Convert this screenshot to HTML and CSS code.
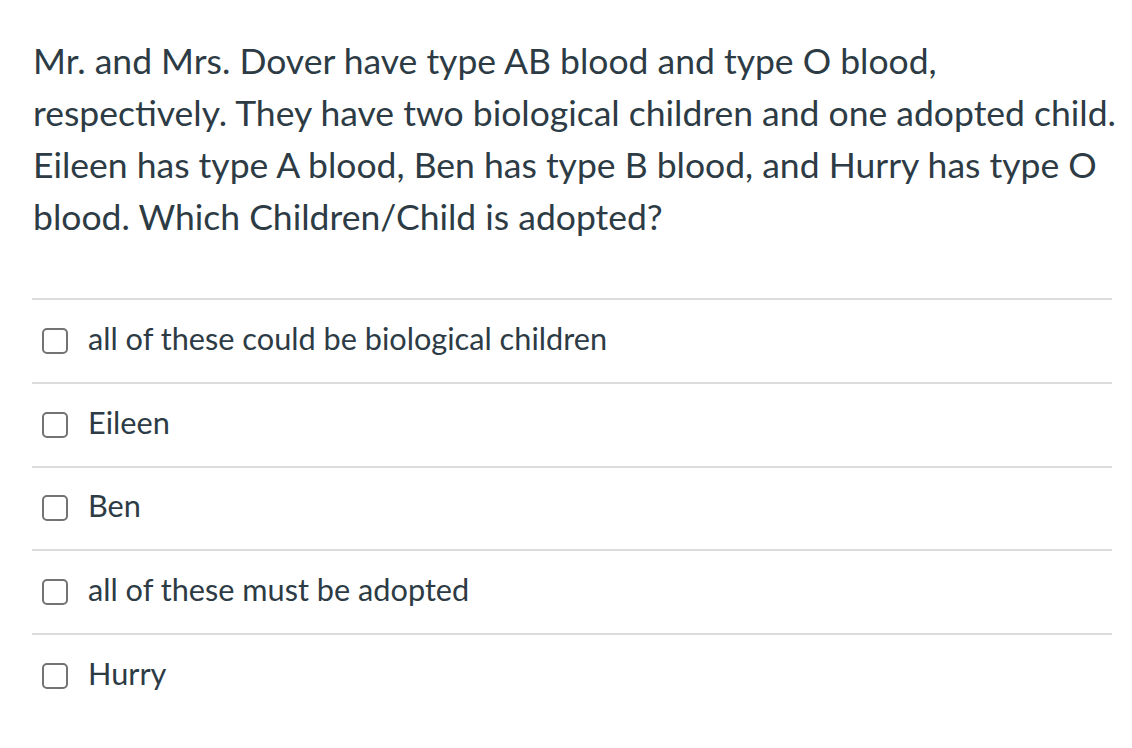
FILE: index.html
```html
<!DOCTYPE html>
<html>
<head>
<meta charset="utf-8">
<link rel="stylesheet" href="styles.css">
</head>
<body>
<div class="quiz">
  <p class="question">Mr. and Mrs. Dover have type AB blood and type O blood, respectively. They have two biological children and one adopted child. Eileen has type A blood, Ben has type B blood, and Hurry has type O blood. Which Children/Child is adopted?</p>
  <div class="answers">
    <label class="answer"><span class="box"></span><span class="text">all of these could be biological children</span></label>
    <label class="answer"><span class="box"></span><span class="text">Eileen</span></label>
    <label class="answer"><span class="box"></span><span class="text">Ben</span></label>
    <label class="answer"><span class="box"></span><span class="text">all of these must be adopted</span></label>
    <label class="answer"><span class="box"></span><span class="text">Hurry</span></label>
  </div>
</div>
</body>
</html>
```
FILE: styles.css
```css
html, body {
  margin: 0;
  padding: 0;
  background: #ffffff;
}
body {
  font-family: Lato, "Noto Sans", sans-serif;
  color: #2d3b45;
}
.quiz {
  padding: 35px 20px 0 32px;
}
.question {
  margin: 0 -14px 55px 0;
  font-size: 35.5px;
  line-height: 52px;
  padding-left: 1px;
}
.answers {
  display: flex;
  flex-direction: column;
}
.answer {
  display: flex;
  align-items: center;
  height: 81.75px;
  border-top: 2px solid #dcdcdc;
  padding-left: 10px;
}
.box {
  width: 22px;
  height: 22px;
  border: 2px solid #737373;
  border-radius: 5px;
  flex: none;
  margin-right: 20px;
}
.text {
  font-size: 30.7px;
  line-height: 36px;
  padding-bottom: 4px;
}
```
